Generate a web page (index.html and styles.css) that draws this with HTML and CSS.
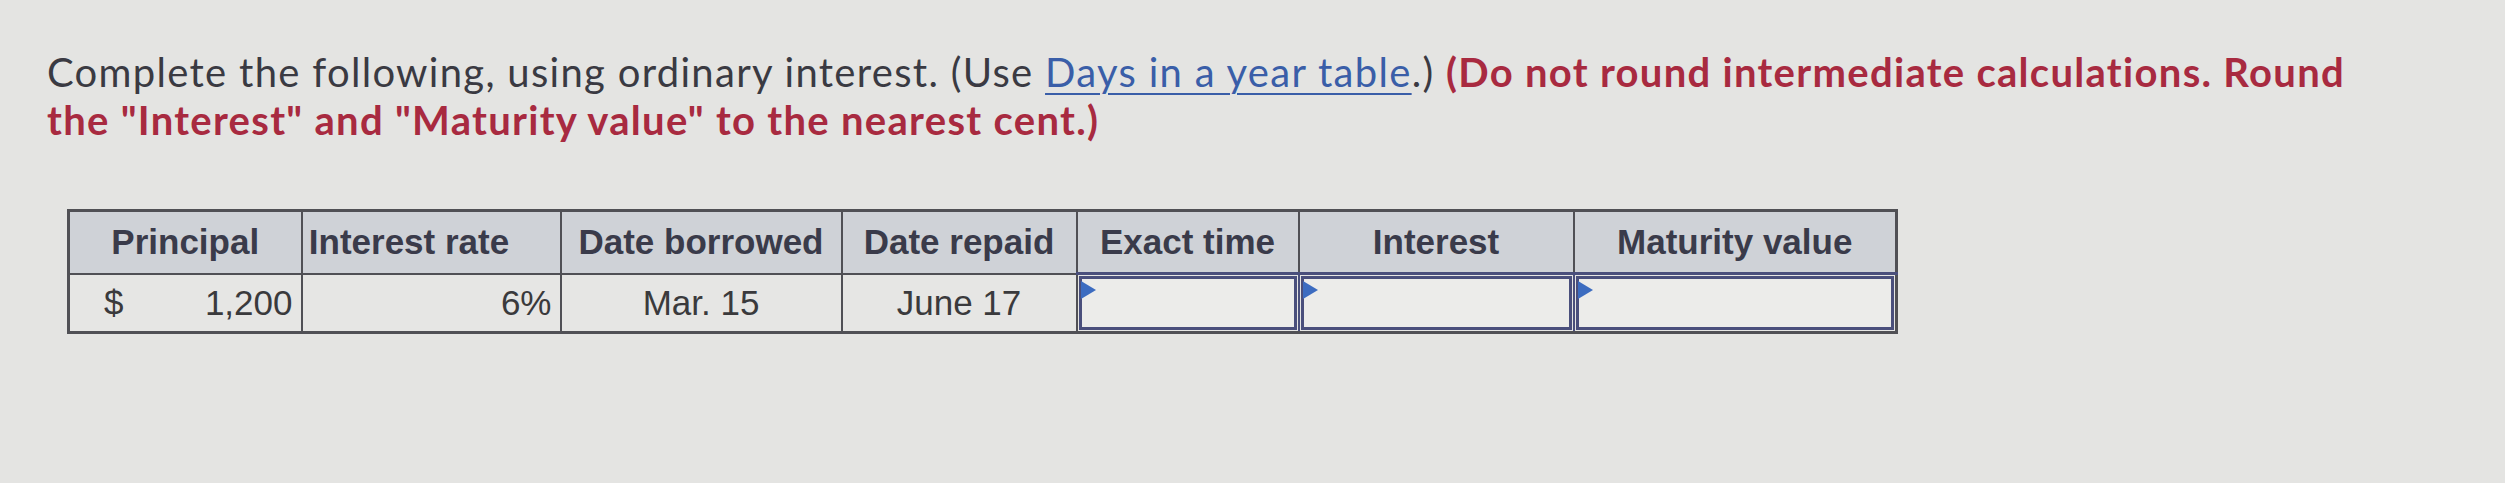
FILE: index.html
```html
<!DOCTYPE html>
<html>
<head>
<meta charset="utf-8">
<link rel="stylesheet" href="styles.css">
</head>
<body>
<div class="page">
  <p class="prompt">Complete the following, using ordinary interest. (Use <a class="link" href="#">Days in a year table</a>.) <strong class="note">(Do not round intermediate calculations. Round<br>the "Interest" and "Maturity value" to the nearest cent.)</strong></p>
  <table class="grid">
    <colgroup>
      <col class="c1"><col class="c2"><col class="c3"><col class="c4"><col class="c5"><col class="c6"><col class="c7">
    </colgroup>
    <thead>
      <tr>
        <th>Principal</th>
        <th class="shift-left">Interest rate</th>
        <th>Date borrowed</th>
        <th>Date repaid</th>
        <th>Exact time</th>
        <th>Interest</th>
        <th>Maturity value</th>
      </tr>
    </thead>
    <tbody>
      <tr>
        <td class="money"><span>$</span><span>1,200</span></td>
        <td class="right">6%</td>
        <td class="center">Mar. 15</td>
        <td class="center">June 17</td>
        <td class="input-cell"><div class="input"><span class="flag"></span></div></td>
        <td class="input-cell"><div class="input"><span class="flag"></span></div></td>
        <td class="input-cell"><div class="input"><span class="flag"></span></div></td>
      </tr>
    </tbody>
  </table>
</div>
</body>
</html>
```

FILE: styles.css
```css
html, body {
  margin: 0;
  padding: 0;
}
body {
  background: #e4e4e2;
  width: 2505px;
  height: 483px;
  overflow: hidden;
}
.page {
  padding: 48px 0 0 47px;
}
.prompt {
  margin: 0;
  font-family: "Lato", "Liberation Sans", sans-serif;
  font-size: 40px;
  letter-spacing: 1.3px;
  line-height: 48px;
  color: #3a3a42;
  white-space: nowrap;
}
.link {
  color: #3a5ea8;
  text-decoration: underline;
  text-decoration-thickness: 2px;
  text-underline-offset: 6px;
}
.note {
  color: #a82a40;
  font-weight: 700;
}
.grid {
  margin: 65px 0 0 20px;
  border-collapse: collapse;
  table-layout: fixed;
  width: 1828px;
  font-family: "Liberation Sans", Arial, sans-serif;
  font-size: 35px;
  color: #3a3a3c;
  border: 3px solid #505055;
}
.c1 { width: 233px; }
.c2 { width: 259px; }
.c3 { width: 281px; }
.c4 { width: 235px; }
.c5 { width: 222px; }
.c6 { width: 275px; }
.c7 { width: 323px; }
.grid th {
  background: #cfd2d7;
  color: #3a3b4a;
  font-weight: 700;
  height: 60px;
  padding: 0 4px;
  border: 2px solid #505055;
  text-align: center;
  white-space: nowrap;
}
.grid th.shift-left {
  padding: 0 44px 0 0;
}
.grid td {
  background: #e6e6e4;
  height: 55px;
  padding: 0 8px;
  border: 2px solid #505055;
  white-space: nowrap;
}
.money span:first-child {
  float: left;
  padding-left: 26px;
}
.money {
  text-align: right;
}
.right { text-align: right; }
.center { text-align: center; }
.grid td.input-cell {
  padding: 0;
  border-color: #4a4f7c;
  border-top: 3px solid #4a4f7c;
}
.input {
  position: relative;
  height: 48px;
  margin: 1px;
  border: 3px solid #4a4f7c;
  background: #ececea;
}
.flag {
  position: absolute;
  top: 2px;
  left: -1px;
  width: 0;
  height: 0;
  border-left: 15px solid #3c6cc0;
  border-top: 9px solid transparent;
  border-bottom: 9px solid transparent;
}
```
